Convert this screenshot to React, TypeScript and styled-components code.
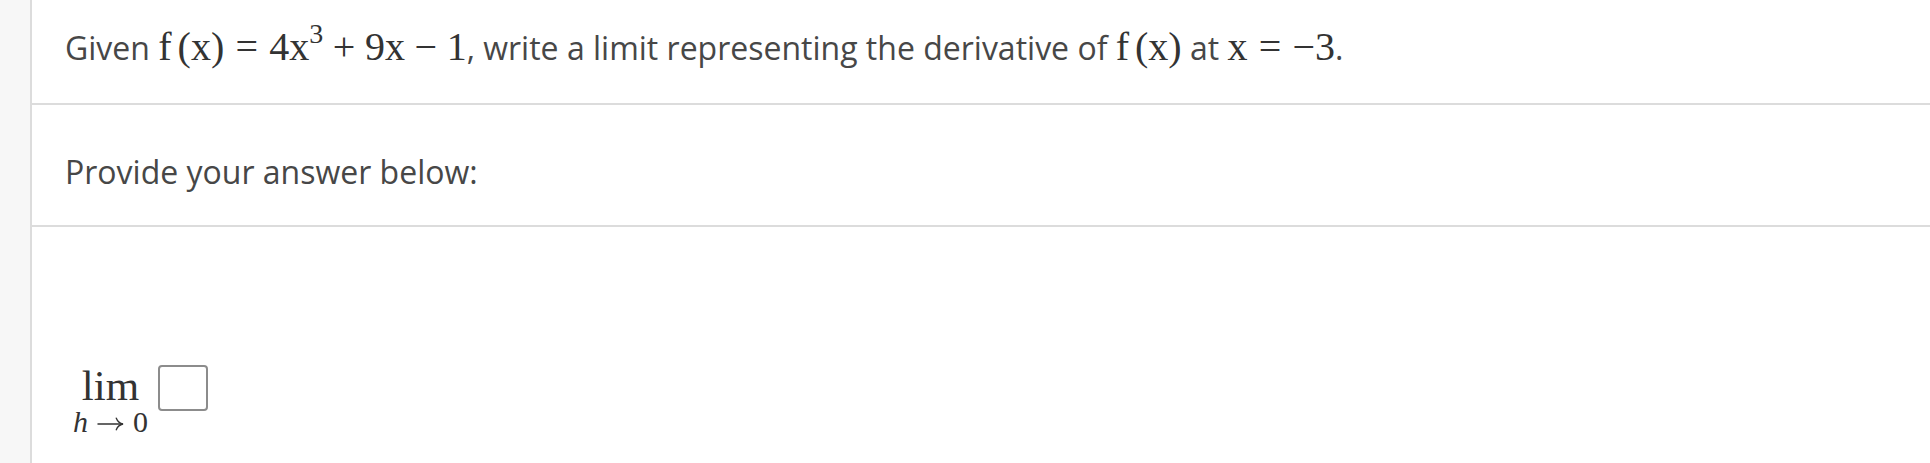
import React from "react";
import styled, { createGlobalStyle } from "styled-components";

const Global = createGlobalStyle`
  html, body { margin: 0; padding: 0; background: #ffffff; }
  body { font-family: "Open Sans", "Noto Sans", sans-serif; color: #474747; }
`;

const Page = styled.div`
  display: flex;
  min-height: 463px;
`;

const Sidebar = styled.aside`
  flex: none;
  width: 30px;
  background: #f7f7f7;
  border-right: 2px solid #dcdcdc;
`;

const Main = styled.main`
  flex: 1;
  display: flex;
  flex-direction: column;
`;

const Section = styled.section<{ $h: number; $shift: number }>`
  box-sizing: border-box;
  height: ${(p) => p.$h}px;
  display: flex;
  align-items: center;
  padding-left: 33px;
  padding-top: ${(p) => (p.$shift > 0 ? p.$shift : 0)}px;
  padding-bottom: ${(p) => (p.$shift < 0 ? -p.$shift : 0)}px;
  border-bottom: 2px solid #dcdcdc;
  font-size: 32px;
  white-space: nowrap;
`;

const AnswerArea = styled.section`
  flex: 1;
  display: flex;
  align-items: flex-start;
  gap: 10px;
  padding: 137px 0 0 41px;
`;

const Math = styled.span`
  font-family: "Liberation Serif", "Times New Roman", serif;
  font-size: 40px;
  color: #333333;
`;

const Gap = styled.span<{ $w: number }>`
  display: inline-block;
  width: ${(p) => p.$w}em;
`;

const Sup = styled.span`
  font-size: 0.7em;
  position: relative;
  top: -0.62em;
`;

const LimStack = styled.div`
  display: flex;
  flex-direction: column;
  align-items: center;
  font-family: "Liberation Serif", "Times New Roman", serif;
  color: #333333;
  line-height: 1;
`;

const LimWord = styled.span`
  font-size: 43px;
`;

const LimSub = styled.span`
  font-size: 30px;
  display: flex;
  align-items: baseline;
`;

const Var = styled.i`
  font-style: italic;
`;

const Arrow = styled.svg`
  width: 0.9em;
  height: 0.6em;
  margin: 0 0.3em;
  align-self: center;
  position: relative;
  top: 0.06em;
`;

const AnswerBox = styled.div`
  box-sizing: border-box;
  width: 50px;
  height: 46px;
  margin-top: 1px;
  border: 2px solid #8c8c8c;
  border-radius: 4px;
  background: #fff;
`;

export default function App() {
  return (
    <>
      <Global />
      <Page>
        <Sidebar />
        <Main>
          <Section $h={105} $shift={-10}>
            <span>
              Given{" "}
              <Math>
                f<Gap $w={0.15} />(x)<Gap $w={0.28} />=<Gap $w={0.28} />4x<Sup>3</Sup>
                <Gap $w={0.24} />+<Gap $w={0.24} />9x<Gap $w={0.24} />−<Gap $w={0.24} />1
              </Math>
              , write a limit representing the derivative of{" "}
              <Math>
                f<Gap $w={0.15} />(x)
              </Math>{" "}
              at{" "}
              <Math>
                x<Gap $w={0.28} />=<Gap $w={0.28} />−3
              </Math>
              .
            </span>
          </Section>
          <Section $h={122} $shift={12}>Provide your answer below:</Section>
          <AnswerArea>
            <LimStack>
              <LimWord>lim</LimWord>
              <LimSub>
                <Var>h</Var>
                <Arrow viewBox="0 0 28 18" fill="none" stroke="#333" strokeWidth="1.4" strokeLinecap="round">
                  <path d="M1 9 H26" />
                  <path d="M20 3 Q22 8 27 9 Q22 10 20 15" />
                </Arrow>
                0
              </LimSub>
            </LimStack>
            <AnswerBox />
          </AnswerArea>
        </Main>
      </Page>
    </>
  );
}
